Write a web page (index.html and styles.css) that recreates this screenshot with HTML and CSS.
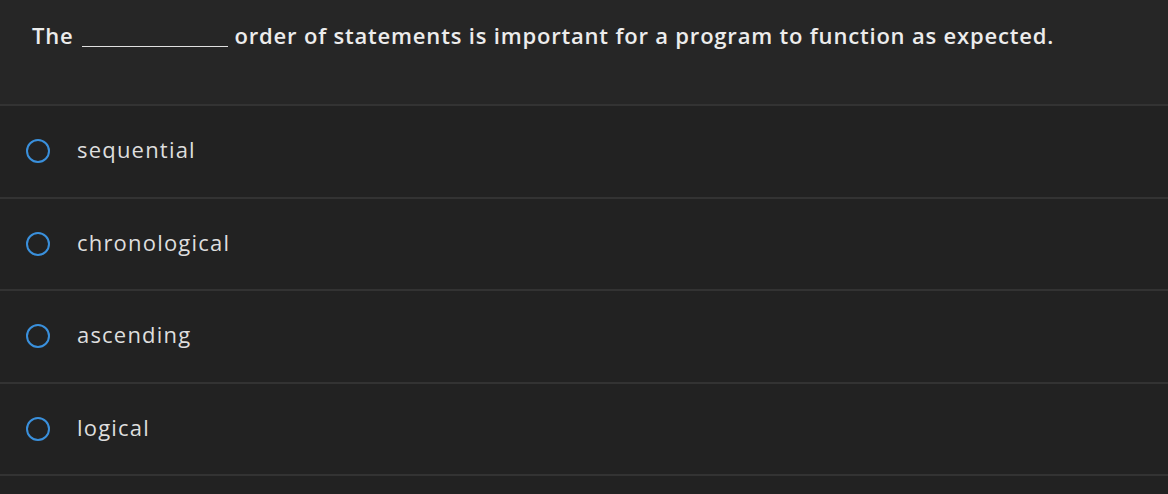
FILE: index.html
```html
<!DOCTYPE html>
<html>
<head>
<meta charset="utf-8">
<link rel="stylesheet" href="styles.css">
</head>
<body>
<div class="question">
  <p class="prompt">The <span class="blank"></span> order of statements is important for a program to function as expected.</p>
</div>
<ul class="options">
  <li class="option"><span class="radio"></span><span class="label">sequential</span></li>
  <li class="option"><span class="radio"></span><span class="label">chronological</span></li>
  <li class="option"><span class="radio"></span><span class="label">ascending</span></li>
  <li class="option"><span class="radio"></span><span class="label">logical</span></li>
</ul>
</body>
</html>
```

FILE: styles.css
```css
html, body {
  margin: 0;
  padding: 0;
  background: #222222;
  height: 100%;
}
body {
  font-family: "Open Sans", "Liberation Sans", sans-serif;
  color: #e2e2e2;
  font-variant-ligatures: none;
}
.question {
  background: #262626;
  height: 106px;
  border-bottom: 2px solid #333333;
  box-sizing: border-box;
  padding: 20px 32px 0;
}
.prompt {
  margin: 0;
  font-size: 22px;
  font-weight: 600;
  line-height: 30px;
  letter-spacing: 0.81px;
  color: #ececec;
}
.blank {
  display: inline-block;
  width: 146px;
  height: 1px;
  margin: 0 0 0 2px;
  border-bottom: 1.5px solid #e0e0e0;
  vertical-align: -3px;
}
.options {
  list-style: none;
  margin: 0;
  padding: 0;
}
.option {
  height: 92.5px;
  border-bottom: 2px solid #333333;
  box-sizing: border-box;
  display: flex;
  align-items: center;
  padding-left: 26px;
}
.radio {
  width: 20px;
  height: 20px;
  border: 2.5px solid #3a90dc;
  border-radius: 50%;
  flex: none;
}
.label {
  margin-left: 27px;
  padding-bottom: 4px;
  font-size: 22px;
  letter-spacing: 1.2px;
  color: #dedede;
}
```
